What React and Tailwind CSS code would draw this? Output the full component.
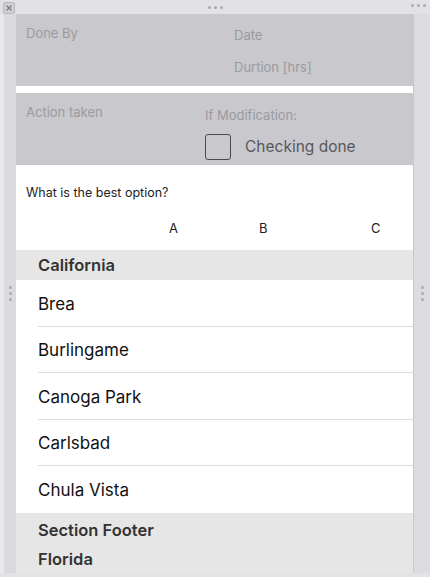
import React from 'react'

const CITIES = ['Brea', 'Burlingame', 'Canoga Park', 'Carlsbad', 'Chula Vista']

function Dots({ vertical }) {
  return (
    <div className={`flex ${vertical ? 'flex-col' : 'flex-row'} gap-[3px]`}>
      <span className="w-[3px] h-[3px] rounded-full bg-[#a9a9ae]" />
      <span className="w-[3px] h-[3px] rounded-full bg-[#a9a9ae]" />
      <span className="w-[3px] h-[3px] rounded-full bg-[#a9a9ae]" />
    </div>
  )
}

export default function App() {
  return (
    <div
      className="w-[430px] h-[577px] bg-[#e2e2e6] flex flex-col overflow-hidden"
      style={{ fontFamily: 'Inter, "Noto Sans", sans-serif' }}
    >
      {/* top frame bar */}
      <div className="h-[14px] flex items-center relative shrink-0">
        <div className="absolute left-[3px] top-[2px] w-[12px] h-[12px] rounded-[2px] bg-[#d0d0d4] border border-[#b8b8bc] flex items-center justify-center">
          <svg width="8" height="8" viewBox="0 0 8 8">
            <path d="M1.5 1.5 L6.5 6.5 M6.5 1.5 L1.5 6.5" stroke="#808085" strokeWidth="1.4" />
          </svg>
        </div>
        <div className="mx-auto">
          <Dots />
        </div>
        <div className="absolute right-[4px] top-[4px]">
          <Dots />
        </div>
      </div>

      <div className="flex flex-1 min-h-0">
        {/* left strip */}
        <div className="w-[16px] flex items-center justify-center shrink-0 bg-[#dadade] border-l-[4px] border-[#e8e8ec]">
          <Dots vertical />
        </div>

        {/* content */}
        <div className="w-[397px] flex flex-col bg-white overflow-hidden">
          <div className="h-[72px] bg-[#c9c8cd] flex text-[13px] text-[#9b9aa0] shrink-0">
            <div className="w-[218px] pl-[10px] pt-[10px]">Done By</div>
            <div className="flex flex-col pt-[12px] gap-[12px]">
              <span>Date</span>
              <span>Durtion [hrs]</span>
            </div>
          </div>
          <div className="h-[7px] bg-white shrink-0" />
          <div className="h-[72px] bg-[#c9c8cd] flex shrink-0">
            <div className="w-[189px] pl-[10px] pt-[10px] text-[13px] text-[#9b9aa0]">Action taken</div>
            <div className="flex flex-col pt-[13px]">
              <span className="text-[13px] text-[#9b9aa0]">If Modification:</span>
              <div className="flex items-center mt-[8px] gap-[14px]">
                <div className="w-[26px] h-[26px] border-[1.5px] border-[#4a4a4e] rounded-[3px]" />
                <span className="text-[15.5px] text-[#58585c]">Checking done</span>
              </div>
            </div>
          </div>

          <div className="h-[85px] flex flex-col shrink-0">
            <div className="pl-[10px] pt-[19px] text-[12.5px] text-[#222]">What is the best option?</div>
            <div className="relative mt-[16px] text-[13px] text-[#222] h-[16px]">
              <span className="absolute left-[153px]">A</span>
              <span className="absolute left-[243px]">B</span>
              <span className="absolute left-[355px]">C</span>
            </div>
          </div>

          <div className="h-[30px] bg-[#e6e6e6] pl-[22px] pt-[1px] flex items-center text-[16.5px] font-semibold text-[#333] shrink-0">
            California
          </div>
          {CITIES.map((c, i) => (
            <div key={c} className="pl-[22px] shrink-0">
              <div
                className={`h-[46.6px] pt-[3px] flex items-center text-[17px] text-[#111] ${
                  i < CITIES.length - 1 ? 'border-b border-[#dcdcdc]' : ''
                }`}
              >
                {c}
              </div>
            </div>
          ))}
          <div className="flex-1 bg-[#e6e6e6] pl-[22px] flex flex-col text-[16.5px] font-semibold text-[#333]">
            <div className="h-[32px] pt-[2px] flex items-center">Section Footer</div>
            <div className="h-[29px] flex items-center">Florida</div>
          </div>
        </div>

        {/* right strip */}
        <div className="flex-1 flex items-center justify-center border-l border-[#c8c8cc] bg-[#dcdce0]">
          <Dots vertical />
        </div>
      </div>
      <div className="h-[4px] shrink-0" />
    </div>
  )
}
